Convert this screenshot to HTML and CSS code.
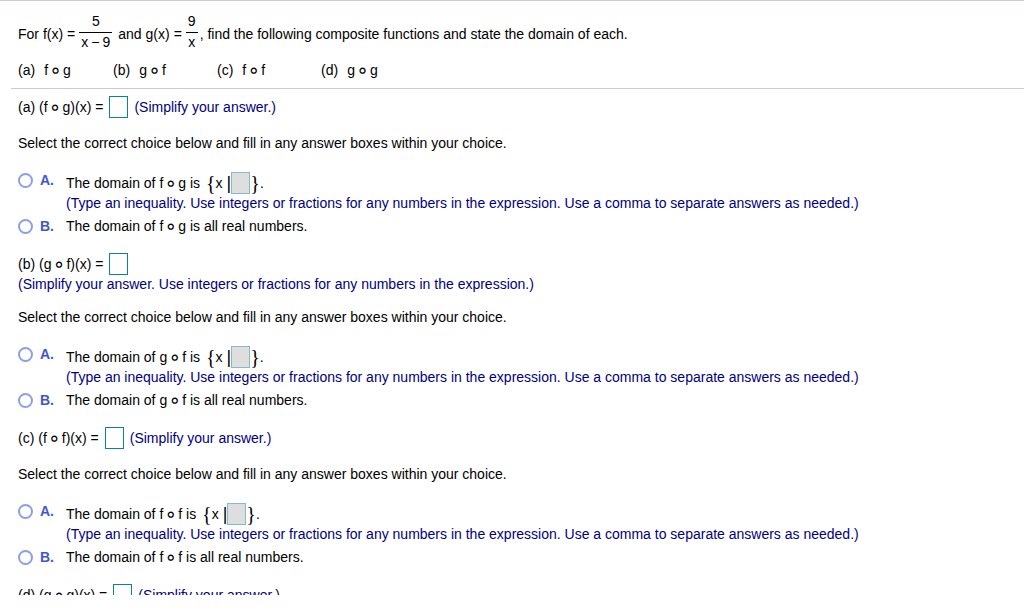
FILE: index.html
```
<!DOCTYPE html>
<html lang="en">
<head>
    <meta charset="UTF-8">
    <meta name="viewport" content="width=device-width, initial-scale=1.0">
    <title>Composite Functions and Domains</title>
    <link rel="stylesheet" href="styles.css">
</head>
<body>
    <main class="exercise">
        <!-- Problem statement -->
        <header class="question">
            <p class="statement">
                <span>For f(x)<span class="equals">=</span></span>
                <span class="fraction"><span class="numerator">5</span><span class="denominator">x<span class="minus">−</span>9</span></span>
                <span class="join">and g(x)<span class="equals">=</span></span>
                <span class="fraction"><span class="numerator">9</span><span class="denominator">x</span></span>
                <span class="rest">, find the following composite functions and state the domain of each.</span>
            </p>
            <ul class="parts">
                <li><span>(a)</span><span>f<span class="ring">∘</span>g</span></li>
                <li><span>(b)</span><span>g<span class="ring">∘</span>f</span></li>
                <li><span>(c)</span><span>f<span class="ring">∘</span>f</span></li>
                <li><span>(d)</span><span>g<span class="ring">∘</span>g</span></li>
            </ul>
        </header>

        <!-- Part a -->
        <section class="part">
            <div class="answer">
                <label for="answerA">(a) (f<span class="ring">∘</span>g)(x) =</label>
                <input type="text" class="box" id="answerA">
                <span class="hint">(Simplify your answer.)</span>
            </div>
            <p class="prompt">Select the correct choice below and fill in any answer boxes within your choice.</p>
            <div class="choice">
                <input type="radio" name="domainA" id="domainA1">
                <label class="letter" for="domainA1">A.</label>
                <div class="choice-text">
                    <div class="set">The domain of f<span class="ring">∘</span>g is <span class="brace open">{</span>x<span class="bar">|</span><input type="text" class="box" aria-label="Domain of f of g" disabled><span class="brace">}</span>.</div>
                    <p class="hint">(Type an inequality. Use integers or fractions for any numbers in the expression. Use a comma to separate answers as needed.)</p>
                </div>
            </div>
            <div class="choice last">
                <input type="radio" name="domainA" id="domainA2">
                <label class="letter" for="domainA2">B.</label>
                <p class="choice-text">The domain of f<span class="ring">∘</span>g is all real numbers.</p>
            </div>
        </section>

        <!-- Part b -->
        <section class="part">
            <div class="answer">
                <label for="answerB">(b) (g<span class="ring">∘</span>f)(x) =</label>
                <input type="text" class="box" id="answerB">
            </div>
            <p class="hint">(Simplify your answer. Use integers or fractions for any numbers in the expression.)</p>
            <p class="prompt">Select the correct choice below and fill in any answer boxes within your choice.</p>
            <div class="choice">
                <input type="radio" name="domainB" id="domainB1">
                <label class="letter" for="domainB1">A.</label>
                <div class="choice-text">
                    <div class="set">The domain of g<span class="ring">∘</span>f is <span class="brace open">{</span>x<span class="bar">|</span><input type="text" class="box" aria-label="Domain of g of f" disabled><span class="brace">}</span>.</div>
                    <p class="hint">(Type an inequality. Use integers or fractions for any numbers in the expression. Use a comma to separate answers as needed.)</p>
                </div>
            </div>
            <div class="choice last">
                <input type="radio" name="domainB" id="domainB2">
                <label class="letter" for="domainB2">B.</label>
                <p class="choice-text">The domain of g<span class="ring">∘</span>f is all real numbers.</p>
            </div>
        </section>

        <!-- Part c -->
        <section class="part">
            <div class="answer">
                <label for="answerC">(c) (f<span class="ring">∘</span>f)(x) =</label>
                <input type="text" class="box" id="answerC">
                <span class="hint">(Simplify your answer.)</span>
            </div>
            <p class="prompt">Select the correct choice below and fill in any answer boxes within your choice.</p>
            <div class="choice">
                <input type="radio" name="domainC" id="domainC1">
                <label class="letter" for="domainC1">A.</label>
                <div class="choice-text">
                    <div class="set">The domain of f<span class="ring">∘</span>f is <span class="brace open">{</span>x<span class="bar">|</span><input type="text" class="box" aria-label="Domain of f of f" disabled><span class="brace">}</span>.</div>
                    <p class="hint">(Type an inequality. Use integers or fractions for any numbers in the expression. Use a comma to separate answers as needed.)</p>
                </div>
            </div>
            <div class="choice last">
                <input type="radio" name="domainC" id="domainC2">
                <label class="letter" for="domainC2">B.</label>
                <p class="choice-text">The domain of f<span class="ring">∘</span>f is all real numbers.</p>
            </div>
        </section>

        <!-- Part d -->
        <section class="part">
            <div class="answer">
                <label for="answerD">(d) (g<span class="ring">∘</span>g)(x) =</label>
                <input type="text" class="box" id="answerD">
                <span class="hint">(Simplify your answer.)</span>
            </div>
        </section>
    </main>
</body>
</html>
```
FILE: styles.css
```
/* Base Styling */
* {
    box-sizing: border-box;
}

body {
    margin: 0;
    font-family: "Liberation Sans", Arial, sans-serif;
    font-size: 14px;
    line-height: 18px;
    color: #000;
    background: #fff;
}

p, ul {
    margin: 0;
    padding: 0;
}

.exercise {
    height: calc(100vh - 21px);
    overflow: hidden;
    border-top: 1px solid #c5cbdc;
}

/* Problem statement */
.question {
    margin-left: 11px;
    padding: 12px 0 9px 7px;
    border-bottom: 1px solid #c5cbdc;
}

.statement {
    display: flex;
    align-items: center;
    height: 42px;
}

.equals {
    margin: 0 4px;
}

.fraction {
    display: flex;
    flex-direction: column;
    padding-bottom: 5px;
    text-align: center;
}

.numerator {
    padding: 0 2px 2px;
    border-bottom: 1px solid #000;
}

.denominator {
    padding: 0 2px;
}

.minus {
    margin: 0 3px;
}

.join {
    margin-left: 6px;
}

.rest {
    margin-left: 2px;
}

.parts {
    display: flex;
    list-style: none;
    margin-top: 6px;
}

.parts li {
    display: flex;
    gap: 9px;
    width: 104px;
}

.parts li:first-child {
    width: 95px;
}

.ring {
    display: inline-block;
    width: 15px;
    font-family: "DejaVu Sans", sans-serif;
    font-size: 20px;
    line-height: 14px;
    text-align: center;
    vertical-align: -2px;
}

/* Answer sections */
.part {
    padding-left: 18px;
}

.question + .part {
    padding-top: 6px;
}

.answer {
    display: flex;
    align-items: center;
    gap: 6px;
    height: 24px;
}

.box {
    width: 19px;
    height: 22px;
    padding: 0 2px;
    border: 1px solid #0d8296;
    border-radius: 0;
    background: #fff;
    font: inherit;
}

.box:disabled {
    border-color: #82bccb;
    background: #dedede;
}

.hint {
    line-height: 17px;
    color: #00007f;
}

.prompt {
    margin: 15px 0 19px;
}

/* Choices */
.choice {
    display: flex;
    align-items: flex-start;
    margin-bottom: 5px;
}

.choice.last {
    margin-bottom: 0;
    padding-bottom: 17px;
}

.choice input[type="radio"] {
    appearance: none;
    width: 15px;
    height: 15px;
    margin: 2px 7px 0 0;
    border: 2px solid #8c9fe6;
    border-radius: 50%;
    background: #fff;
}

.choice input[type="radio"]:checked {
    background: #3c57cf;
}

.letter {
    width: 26px;
    font-weight: bold;
    color: #3c57cf;
}

.choice-text {
    flex: 1;
}

.set {
    display: flex;
    align-items: center;
    height: 24px;
    white-space: pre;
}

.brace {
    font-family: "Liberation Serif", serif;
    font-size: 20px;
}

.brace.open {
    margin-left: 2px;
}

.bar {
    margin-left: 4px;
    font-size: 18px;
}
```
